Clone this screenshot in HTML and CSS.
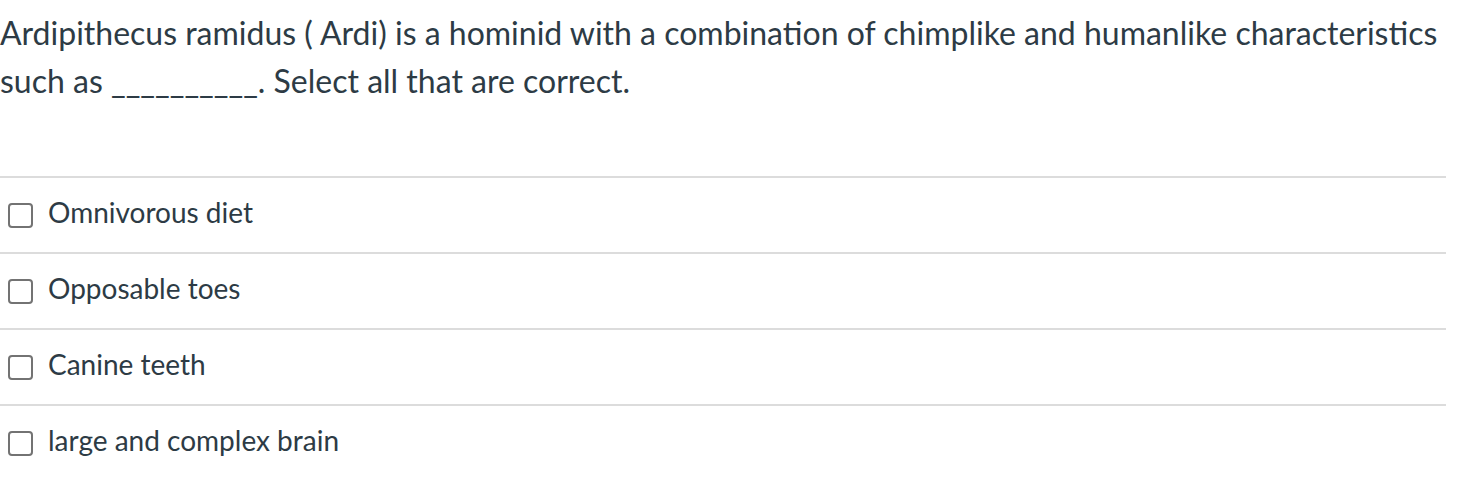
FILE: index.html
```html
<!DOCTYPE html>
<html>
<head>
<meta charset="utf-8">
<link rel="stylesheet" href="styles.css">
</head>
<body>
<div class="question">
  <p class="prompt">Ardipithecus ramidus ( Ardi) is a hominid with a combination of chimplike and humanlike characteristics such as __________. Select all that are correct.</p>
  <div class="answers">
    <label class="answer"><span class="box"></span><span class="label">Omnivorous diet</span></label>
    <label class="answer"><span class="box"></span><span class="label">Opposable toes</span></label>
    <label class="answer"><span class="box"></span><span class="label">Canine teeth</span></label>
    <label class="answer"><span class="box"></span><span class="label">large and complex brain</span></label>
  </div>
</div>
</body>
</html>
```

FILE: styles.css
```css
html, body {
  margin: 0;
  padding: 0;
  background: #fff;
}
body {
  font-family: Lato, "Liberation Sans", sans-serif;
  color: #2d3b45;
}
.question {
  width: 1446px;
}
.prompt {
  margin: 0;
  padding-top: 9px;
  font-size: 32px;
  line-height: 48px;
  width: 1446px;
}
.answers {
  margin-top: 71px;
}
.answer {
  display: flex;
  align-items: center;
  gap: 15px;
  height: 74px;
  border-top: 2px solid #dcdcdc;
  padding-left: 8px;
}
.box {
  width: 21px;
  height: 21px;
  border: 2px solid #737373;
  border-radius: 4px;
  flex: none;
}
.label {
  font-size: 28px;
  line-height: 32px;
  margin-top: -6px;
}
```
